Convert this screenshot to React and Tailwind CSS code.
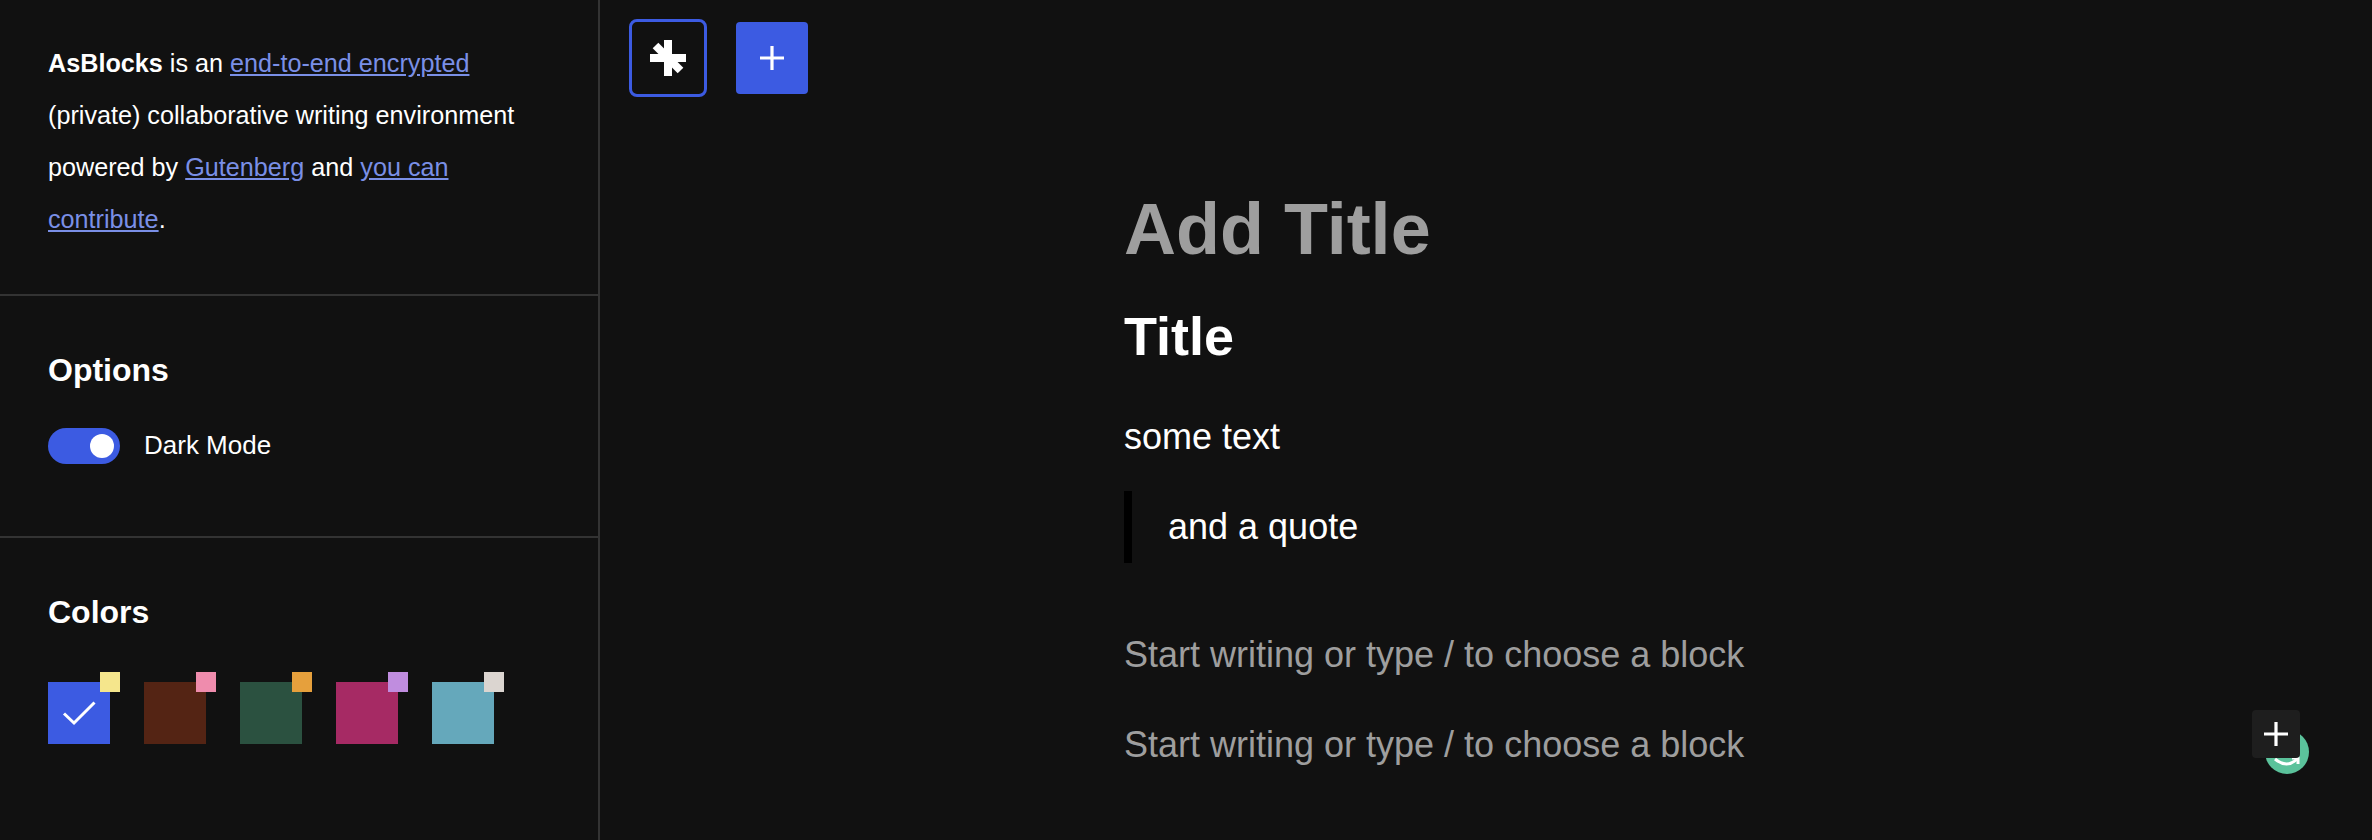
import React from 'react';

const swatches = [
	{ bg: 'bg-[#3c5be2]', dot: 'bg-[#f5e68c]', checked: true },
	{ bg: 'bg-[#542414]', dot: 'bg-[#ef8cad]' },
	{ bg: 'bg-[#2b5140]', dot: 'bg-[#e6a03c]' },
	{ bg: 'bg-[#a62a64]', dot: 'bg-[#c08ddf]' },
	{ bg: 'bg-[#65a8bb]', dot: 'bg-[#dbd5d0]' },
];

const PlusIcon = () => (
	<svg width="48" height="48" viewBox="0 0 24 24" fill="#fff">
		<path d="M18 11.2h-5.2V6h-1.6v5.2H6v1.6h5.2V18h1.6v-5.2H18z" />
	</svg>
);

const LogoIcon = () => (
	<svg width="36" height="36" viewBox="0 0 36 36" fill="#fff">
		<rect x="14" y="0" width="8" height="36" />
		<rect x="0" y="14" width="36" height="8" />
		<path d="M5.5 5.5L30.5 30.5" stroke="#fff" strokeWidth="8" />
	</svg>
);

const Link = ({ children }) => (
	<a href="#" className="text-[#7a8fe6] underline">
		{children}
	</a>
);

const App = () => {
	return (
		<div className="flex h-[840px] overflow-hidden bg-[#111111] text-white font-['Liberation_Sans',Arial,sans-serif]">
			<aside className="w-[600px] shrink-0 border-r-2 border-[#333333]">
				<div className="h-[296px] border-b-2 border-[#333333] pl-[48px] pr-[62px] pt-[37px] text-[25.2px] leading-[52px]">
					<strong>AsBlocks</strong> is an <Link>end-to-end encrypted</Link> (private) collaborative writing environment powered by <Link>Gutenberg</Link> and <Link>you can contribute</Link>.
				</div>
				<div className="h-[242px] border-b-2 border-[#333333] pl-[48px] pt-[52px]">
					<h2 className="text-[32px] font-bold leading-[44px]">Options</h2>
					<div className="mt-[34px] flex items-center gap-[24px]">
						<div className="flex h-[36px] w-[72px] items-center justify-end rounded-full bg-[#3c5be2] pr-[6px]">
							<div className="h-[24px] w-[24px] rounded-full bg-white" />
						</div>
						<span className="text-[26px]">Dark Mode</span>
					</div>
				</div>
				<div className="pl-[48px] pt-[52px]">
					<h2 className="text-[32px] font-bold leading-[44px]">Colors</h2>
					<div className="mt-[48px] flex gap-[34px]">
						{swatches.map((s, i) => (
							<div key={i} className={`relative h-[62px] w-[62px] ${s.bg}`}>
								<div className={`absolute -right-[10px] -top-[10px] h-[20px] w-[20px] ${s.dot}`} />
								{s.checked && (
									<svg className="absolute inset-0" width="62" height="62" viewBox="0 0 62 62" fill="none">
										<path d="M16 31.5L26 41L46.5 20.5" stroke="#fff" strokeWidth="3" />
									</svg>
								)}
							</div>
						))}
					</div>
				</div>
			</aside>
			<main className="relative flex-1">
				<div className="flex items-center gap-[29px] pl-[29px] pt-[19px]">
					<button type="button" className="flex h-[78px] w-[78px] items-center justify-center rounded-lg border-[3px] border-[#3c5be2]">
						<LogoIcon />
					</button>
					<button type="button" className="flex h-[72px] w-[72px] items-center justify-center rounded bg-[#3c5be2]">
						<PlusIcon />
					</button>
				</div>
				<div className="ml-[524px] mt-[89px] w-[840px]">
					<h1 className="text-[72px] font-bold leading-[86px] text-[#9e9e9e]">Add Title</h1>
					<h2 className="mt-[28px] text-[54px] font-bold leading-[72px]">Title</h2>
					<p className="mt-[38px] text-[36px] leading-[54px]">some text</p>
					<blockquote className="mt-[27px] h-[72px] border-l-8 border-black pl-[36px] text-[36px] leading-[72px]">and a quote</blockquote>
					<p className="mt-[65px] text-[36px] leading-[54px] text-[#9e9e9e]">Start writing or type / to choose a block</p>
					<p className="mt-[36px] text-[36px] leading-[54px] text-[#9e9e9e]">Start writing or type / to choose a block</p>
				</div>
				<div className="absolute left-[1665px] top-[730px] h-[44px] w-[44px] rounded-full bg-[#5bc29b]">
					<svg width="44" height="44" viewBox="0 0 44 44" fill="none" stroke="#fff" strokeWidth="3">
						<path d="M10 29Q22 39 32 29" />
						<path d="M33 34V28H27" />
					</svg>
				</div>
				<button type="button" className="absolute left-[1652px] top-[710px] flex h-[48px] w-[48px] items-center justify-center rounded bg-[#1e1e1e]">
					<PlusIcon />
				</button>
			</main>
		</div>
	);
};

export default App;
